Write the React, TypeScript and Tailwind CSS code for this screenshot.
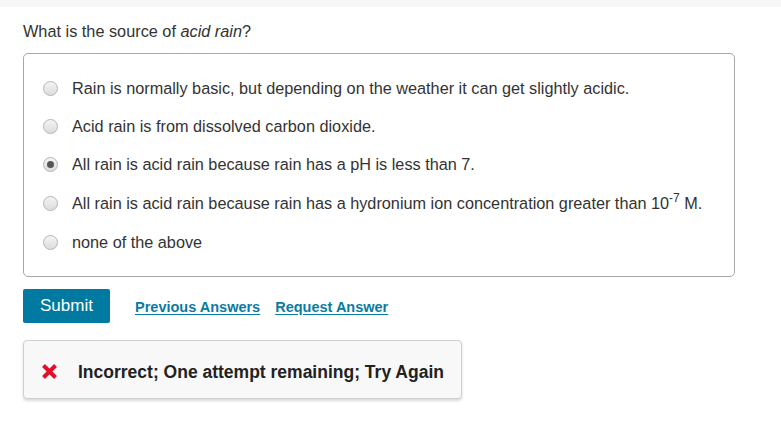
import React from "react";

const options = [
  { text: <>Rain is normally basic, but depending on the weather it can get slightly acidic.</>, checked: false },
  { text: <>Acid rain is from dissolved carbon dioxide.</>, checked: false },
  { text: <>All rain is acid rain because rain has a pH is less than 7.</>, checked: true },
  {
    text: (
      <>
        All rain is acid rain because rain has a hydronium ion concentration greater than 10
        <sup className="text-[12px] top-[-0.6em]">-7</sup> M.
      </>
    ),
    checked: false,
  },
  { text: <>none of the above</>, checked: false },
];

function Radio({ checked }: { checked: boolean }) {
  return (
    <span className="w-[15px] h-[15px] rounded-full border border-[#b5b5b5] bg-gradient-to-b from-[#f4f4f4] to-[#dcdcdc] flex items-center justify-center shrink-0">
      {checked && <span className="w-[7px] h-[7px] rounded-full bg-[#555]" />}
    </span>
  );
}

export default function App() {
  return (
    <div className="w-[781px] h-[441px] bg-white text-[#333] overflow-hidden" style={{ fontFamily: '"Liberation Sans", Arial, sans-serif' }}>
      <div className="h-[7px] bg-[#f7f7f7]" />
      <div className="pl-[23px] pt-[15px]">
        <p className="text-[16.3px] leading-[18px]">
          What is the source of <i>acid rain</i>?
        </p>
        <div className="mt-[13px] w-[712px] h-[224px] border border-[#a8a8a8] rounded-[5px] pt-[15px] pl-[19px]">
          <div className="flex flex-col">
            {options.map((o, i) => (
              <div key={i} className={`flex items-center gap-[14px] ${i === 3 ? "h-[40px]" : "h-[38px]"}`}>
                <Radio checked={o.checked} />
                <span className="text-[16.25px] leading-[18px]">{o.text}</span>
              </div>
            ))}
          </div>
        </div>
        <div className="mt-[12px] flex items-center">
          <button className="w-[87px] h-[34px] bg-[#007aa0] text-white text-[17px] rounded-[2px]">Submit</button>
          <a className="ml-[25px] pt-[3px] text-[14.5px] font-bold text-[#0a7ba3] underline underline-offset-2">Previous Answers</a>
          <a className="ml-[15px] pt-[3px] text-[14.5px] font-bold text-[#0a7ba3] underline underline-offset-2">Request Answer</a>
        </div>
        <div className="mt-[17px] w-[439px] h-[59px] bg-[#f8f8f8] border border-[#cfcfcf] rounded-[4px] shadow-[0_2px_3px_rgba(0,0,0,0.15)] flex items-center pl-[17px] pt-[6px]">
          <svg width="17" height="17" viewBox="0 0 17 17" className="-mt-[2px]">
            <path d="M2.5 2.5 L14.5 14.5 M14.5 2.5 L2.5 14.5" stroke="#e0102a" strokeWidth="4" strokeLinecap="butt" />
          </svg>
          <span className="ml-[20px] text-[17.5px] font-bold text-[#222]">Incorrect; One attempt remaining; Try Again</span>
        </div>
      </div>
    </div>
  );
}
